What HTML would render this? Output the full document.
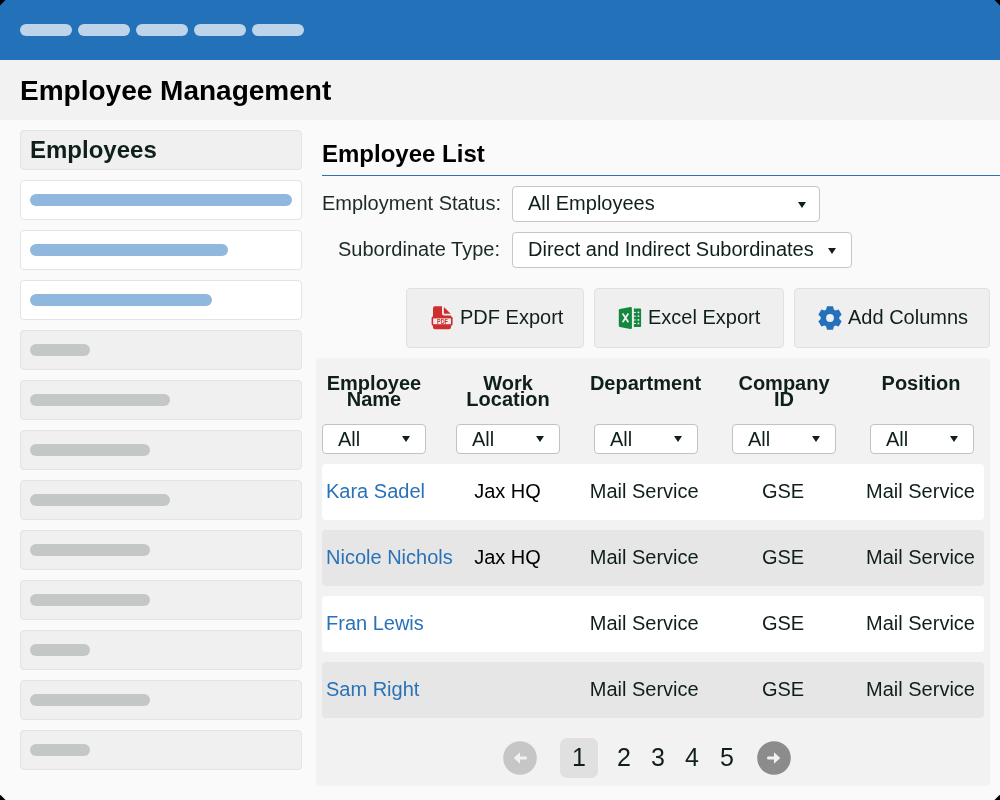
<!DOCTYPE html>
<html><head><meta charset="utf-8">
<style>
*{box-sizing:border-box;margin:0;padding:0}
html,body{width:1000px;height:800px;background:#000;overflow:hidden}
body{font-family:"Liberation Sans",sans-serif;color:#0f2019}
#app{will-change:transform;position:absolute;left:0;top:0;width:1000px;height:800px;background:#fafafa;overflow:hidden;clip-path:polygon(5.5px 0,994.5px 0,1000px 5.5px,1000px 794.5px,994.5px 800px,5.5px 800px,0 794.5px,0 5.5px)}
.abs{position:absolute}
#hdr{left:0;top:0;width:1000px;height:60px;background:#2271b9}
.pill{top:24px;width:52px;height:12px;border-radius:6px;background:#bdd4ea}
#tbar{left:0;top:60px;width:1000px;height:60px;background:#f2f2f2}
#title{left:20px;top:75px;font-size:28px;font-weight:700;color:#000;line-height:32px;white-space:nowrap}
.side{left:20px;width:282px;height:40px;border-radius:4px;border:1px solid #e3e3e3;background:#f0f0f0}
.side.sel{background:#fff;border-color:#e4e4e4}
.bar{left:9px;top:13px;height:12px;border-radius:6px;background:#c3c7c6}
.sel .bar{background:#90b7dd}
#sidehead span{position:absolute;left:9px;top:5px;font-size:24px;font-weight:700;line-height:28px;color:#0f2019}
#listtitle{left:322px;top:140px;font-size:24px;font-weight:700;line-height:28px;color:#000;white-space:nowrap}
#bline{left:322px;top:175px;width:678px;height:1px;background:#2a72b9}
.lbl{font-size:20px;line-height:24px;white-space:nowrap;color:#1b2a23}
.dd{left:512px;height:36px;background:#fff;border:1px solid #c6c6c6;border-radius:4px}
.dd span{position:absolute;left:15px;top:4px;font-size:20px;line-height:24px;white-space:nowrap;color:#0f2019}
.tri{width:0;height:0;border-left:4px solid transparent;border-right:4px solid transparent;border-top:6px solid #0f2019}
.btn{top:288px;height:60px;background:#efefef;border:1px solid #e0e0e0;border-radius:4px}
.btn span{position:absolute;top:16px;font-size:20px;line-height:24px;white-space:nowrap;color:#0f2019}
.btn svg{position:absolute}
#tbl{left:316px;top:358px;width:674px;height:428px;background:#f2f2f2;border-radius:4px}
.th{width:140px;font-size:20px;font-weight:700;line-height:16px;text-align:center;color:#0f2019;white-space:nowrap}
.fsel{top:424px;width:104px;height:30px;background:#fff;border:1px solid #c2c2c2;border-radius:4px}
.fsel span{position:absolute;left:15px;top:2px;font-size:20px;line-height:24px;color:#0f2019}
.fsel .tri{left:79px;top:11px}
.row{left:322px;width:662px;height:56px;border-radius:4px;background:#fff}
.row.g{background:#e6e6e6}
.cell{font-size:20px;line-height:24px;white-space:nowrap;color:#0f2019}
.cc{width:140px;text-align:center}
.link{color:#2a72b8}
.pg{font-size:25px;line-height:30px;color:#0f2019;text-align:center}
</style></head>
<body>
<div id="app">
  <div id="hdr" class="abs">
    <div class="abs pill" style="left:20px"></div>
    <div class="abs pill" style="left:78px"></div>
    <div class="abs pill" style="left:136px"></div>
    <div class="abs pill" style="left:194px"></div>
    <div class="abs pill" style="left:252px"></div>
  </div>
  <div id="tbar" class="abs"></div>
  <div id="title" class="abs">Employee Management</div>

  <div id="sidehead" class="abs side" style="top:130px"><span>Employees</span></div>
  <div class="abs side sel" style="top:180px"><div class="abs bar" style="width:262px"></div></div>
  <div class="abs side sel" style="top:230px"><div class="abs bar" style="width:198px"></div></div>
  <div class="abs side sel" style="top:280px"><div class="abs bar" style="width:182px"></div></div>
  <div class="abs side" style="top:330px"><div class="abs bar" style="width:60px"></div></div>
  <div class="abs side" style="top:380px"><div class="abs bar" style="width:140px"></div></div>
  <div class="abs side" style="top:430px"><div class="abs bar" style="width:120px"></div></div>
  <div class="abs side" style="top:480px"><div class="abs bar" style="width:140px"></div></div>
  <div class="abs side" style="top:530px"><div class="abs bar" style="width:120px"></div></div>
  <div class="abs side" style="top:580px"><div class="abs bar" style="width:120px"></div></div>
  <div class="abs side" style="top:630px"><div class="abs bar" style="width:60px"></div></div>
  <div class="abs side" style="top:680px"><div class="abs bar" style="width:120px"></div></div>
  <div class="abs side" style="top:730px"><div class="abs bar" style="width:60px"></div></div>

  <div id="listtitle" class="abs">Employee List</div>
  <div id="bline" class="abs"></div>
  <div class="abs lbl" style="left:322px;top:191px">Employment Status:</div>
  <div class="abs dd" style="top:186px;width:308px"><span>All Employees</span><div class="abs tri" style="left:285px;top:15px"></div></div>
  <div class="abs lbl" style="left:338px;top:237px">Subordinate Type:</div>
  <div class="abs dd" style="top:232px;width:340px"><span>Direct and Indirect Subordinates</span><div class="abs tri" style="left:315px;top:15px"></div></div>

  <div class="abs btn" style="left:406px;width:178px">
    <svg style="left:21px;top:14px" width="30" height="30" viewBox="0 0 30 30">
      <path fill="#cf2e2e" d="M5,5.2Q5,3.2 7,3.2L14,3.2L14,10.4Q14,12.4 16,12.4L23,12.4L23,24.2Q23,26.2 21,26.2L7,26.2Q5,26.2 5,24.2Z"/>
      <path fill="#cf2e2e" d="M15.9,3.9L22.7,10.8L15.9,10.8Z"/>
      <rect x="3.6" y="13.3" width="21" height="9.6" rx="2" fill="#cf2e2e"/>
      <rect x="5.2" y="15.4" width="17.7" height="5.8" fill="#efefef"/>
      <text x="9" y="20.9" font-family="Liberation Sans" font-weight="700" font-size="6.9" textLength="10.9" lengthAdjust="spacingAndGlyphs" fill="#cf2e2e">PDF</text>
    </svg>
    <span style="left:53px">PDF Export</span></div>
  <div class="abs btn" style="left:594px;width:190px">
    <svg style="left:20px;top:14px" width="30" height="30" viewBox="0 0 30 30">
      <path fill="#11883d" d="M4.8,6Q3.8,6.2 3.8,7.2L3.8,22.8Q3.8,23.8 4.8,24L15.4,26Q16.9,26.2 16.9,24.7L16.9,5.3Q16.9,3.8 15.4,4Z"/>
      <path stroke="#efefef" stroke-width="1.8" fill="none" d="M7.6,10.4L13.4,19.2M13.4,10.4L7.6,19.2"/>
      <path fill="#11883d" d="M18.9,5.6L25.1,5.6Q26.1,5.6 26.1,6.6L26.1,23Q26.1,24 25.1,24L18.9,24Z"/>
      <g fill="#efefef"><rect x="18.9" y="8.9" width="1.9" height="1.1"/><rect x="18.9" y="12.6" width="1.9" height="1.1"/><rect x="18.9" y="16.4" width="1.9" height="1.1"/><rect x="18.9" y="19.9" width="1.9" height="1.1"/>
      <circle cx="23.4" cy="9.4" r="0.95"/><circle cx="23.4" cy="13.1" r="0.95"/><circle cx="23.4" cy="16.9" r="0.95"/><circle cx="23.4" cy="20.4" r="0.95"/></g>
    </svg>
    <span style="left:53px">Excel Export</span></div>
  <div class="abs btn" style="left:794px;width:196px">
    <svg style="left:20px;top:14px" width="30" height="30" viewBox="0 0 30 30"><path fill="#2470ba" fill-rule="evenodd" d="M11.14,6.54L12.00,3.28L18.00,3.28L18.86,6.54A9.3,9.3 0 0 1 20.40,7.43L23.65,6.54L26.65,11.74L24.26,14.11A9.3,9.3 0 0 1 24.26,15.89L26.65,18.26L23.65,23.46L20.40,22.57A9.3,9.3 0 0 1 18.86,23.46L18.00,26.72L12.00,26.72L11.14,23.46A9.3,9.3 0 0 1 9.60,22.57L6.35,23.46L3.35,18.26L5.74,15.89A9.3,9.3 0 0 1 5.74,14.11L3.35,11.74L6.35,6.54L9.60,7.43A9.3,9.3 0 0 1 11.14,6.54ZM11.1,15A3.9,3.9 0 1 0 18.9,15A3.9,3.9 0 1 0 11.1,15Z"/></svg>
    <span style="left:53px">Add Columns</span></div>

  <div id="tbl" class="abs"></div>
  <div class="abs th" style="left:304px;top:375px">Employee<br>Name</div>
  <div class="abs th" style="left:438px;top:375px">Work<br>Location</div>
  <div class="abs th" style="left:575.5px;top:375px">Department</div>
  <div class="abs th" style="left:714px;top:375px">Company<br>ID</div>
  <div class="abs th" style="left:851px;top:375px">Position</div>
  <div class="abs fsel" style="left:322px"><span>All</span><div class="abs tri"></div></div>
  <div class="abs fsel" style="left:456px"><span>All</span><div class="abs tri"></div></div>
  <div class="abs fsel" style="left:594px"><span>All</span><div class="abs tri"></div></div>
  <div class="abs fsel" style="left:732px"><span>All</span><div class="abs tri"></div></div>
  <div class="abs fsel" style="left:870px"><span>All</span><div class="abs tri"></div></div>
  <div class="abs row" style="top:464px"></div>
  <div class="abs row g" style="top:530px"></div>
  <div class="abs row" style="top:596px"></div>
  <div class="abs row g" style="top:662px"></div>
  <div class="abs cell link" style="left:326px;top:479px">Kara Sadel</div>
  <div class="abs cell cc" style="left:437.5px;top:479px;color:#000">Jax HQ</div>
  <div class="abs cell cc" style="left:574.2px;top:479px">Mail Service</div>
  <div class="abs cell cc" style="left:713px;top:479px">GSE</div>
  <div class="abs cell cc" style="left:850.5px;top:479px">Mail Service</div>
  <div class="abs cell link" style="left:326px;top:545px">Nicole Nichols</div>
  <div class="abs cell cc" style="left:437.5px;top:545px;color:#000">Jax HQ</div>
  <div class="abs cell cc" style="left:574.2px;top:545px">Mail Service</div>
  <div class="abs cell cc" style="left:713px;top:545px">GSE</div>
  <div class="abs cell cc" style="left:850.5px;top:545px">Mail Service</div>
  <div class="abs cell link" style="left:326px;top:611px">Fran Lewis</div>
  <div class="abs cell cc" style="left:574.2px;top:611px">Mail Service</div>
  <div class="abs cell cc" style="left:713px;top:611px">GSE</div>
  <div class="abs cell cc" style="left:850.5px;top:611px">Mail Service</div>
  <div class="abs cell link" style="left:326px;top:677px">Sam Right</div>
  <div class="abs cell cc" style="left:574.2px;top:677px">Mail Service</div>
  <div class="abs cell cc" style="left:713px;top:677px">GSE</div>
  <div class="abs cell cc" style="left:850.5px;top:677px">Mail Service</div>

  <svg class="abs" style="left:500px;top:738px" width="40" height="40" viewBox="-20 -20 40 40"><circle cx="0" cy="0" r="16.8" fill="#c6c6c6"/><path fill="#f2f2f2" d="M6.3,-1.6Q7.9,0 6.3,1.6L0,1.6L0,5.75L-6.25,0L0,-5.75L0,-1.6Z"/></svg>
  <div class="abs" style="left:560px;top:738px;width:38px;height:40px;border-radius:7px;background:#e0e0e0"></div>
  <div class="abs pg" style="left:560px;top:742px;width:38px">1</div>
  <div class="abs pg" style="left:610px;top:742px;width:28px">2</div>
  <div class="abs pg" style="left:644px;top:742px;width:28px">3</div>
  <div class="abs pg" style="left:678px;top:742px;width:28px">4</div>
  <div class="abs pg" style="left:713px;top:742px;width:28px">5</div>
  <svg class="abs" style="left:754px;top:738px" width="40" height="40" viewBox="-20 -20 40 40"><circle cx="0" cy="0" r="16.8" fill="#8c8c8c"/><path fill="#f2f2f2" d="M-6.3,-1.6Q-7.9,0 -6.3,1.6L0,1.6L0,5.75L6.25,0L0,-5.75L0,-1.6Z"/></svg>
</div>
</body></html>
